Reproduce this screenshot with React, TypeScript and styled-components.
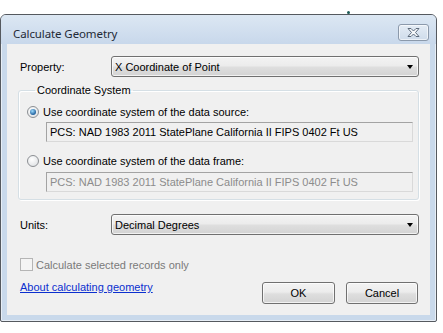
import React from 'react';
import styled, { createGlobalStyle } from 'styled-components';

const Global = createGlobalStyle`
  html, body { margin: 0; padding: 0; background: #fff; }
  body {
    width: 443px; height: 333px; overflow: hidden;
    font-family: "Liberation Sans", Arial, sans-serif;
    font-size: 11px; color: #000;
  }
`;

const Page = styled.div`
  position: relative;
  width: 443px;
  height: 333px;
  box-sizing: border-box;
  padding-top: 14px;
`;

const Dot = styled.div`
  position: absolute;
  left: 347px;
  top: 11px;
  width: 3px;
  height: 3px;
  border-radius: 50%;
  background: #1d5b57;
`;

const Window = styled.div`
  width: 437px;
  height: 308px;
  box-sizing: border-box;
  border: 1px solid #55595f;
  border-radius: 6px 6px 2px 2px;
  background: #c9d9eb;
  box-shadow: inset 0 0 0 1px rgba(255, 255, 255, 0.55);
  display: flex;
  flex-direction: column;
  overflow: hidden;
`;

const TitleBar = styled.div`
  height: 29px;
  flex: none;
  box-sizing: border-box;
  padding: 6px 7px 0 12px;
  display: flex;
  align-items: center;
  justify-content: space-between;
  background: linear-gradient(#dce7f3, #c8d8eb);
`;

const Title = styled.span`
  font-family: "Noto Sans", "Open Sans", sans-serif;
  font-size: 11.5px;
  color: #1f2a36;
  letter-spacing: -0.1px;
  padding-top: 1px;
`;

const CloseButton = styled.div`
  width: 31px;
  height: 17px;
  box-sizing: border-box;
  border: 1px solid #8b99ab;
  border-radius: 3px;
  background: linear-gradient(#e4ecf5, #cfdceb);
  box-shadow: inset 0 0 0 1px rgba(255, 255, 255, 0.6);
  display: flex;
  align-items: center;
  justify-content: center;
`;

const Client = styled.div`
  flex: 1;
  margin: 0 6px 6px 6px;
  background: #f0f0f0;
  box-sizing: border-box;
  padding: 12px 11px 0 11px;
  display: flex;
  flex-direction: column;
`;

const FieldRow = styled.div<{ $top: number }>`
  display: flex;
  align-items: center;
  margin-top: ${(p) => p.$top}px;
`;

const Label = styled.span`
  width: 93px;
  padding-left: 2px;
  box-sizing: border-box;
  flex: none;
`;

const Combo = styled.div`
  flex: 1;
  height: 21px;
  box-sizing: border-box;
  border: 1px solid #707070;
  border-radius: 3px;
  background: linear-gradient(#f3f3f3 0%, #ececec 45%, #dedede 55%, #d3d3d3 100%);
  box-shadow: inset 0 0 0 1px rgba(255, 255, 255, 0.7);
  display: flex;
  align-items: center;
  justify-content: space-between;
  padding: 0 5px 0 3px;
`;

const Arrow = styled.span`
  width: 0;
  height: 0;
  border-left: 3.5px solid transparent;
  border-right: 3.5px solid transparent;
  border-top: 4px solid #000;
`;

const Group = styled.fieldset`
  margin: 6px 0 0 0;
  padding: 8px 5px 7px 8px;
  border: 1px solid #d5dfe5;
  border-radius: 3px;
  box-shadow: inset 1px 1px 0 #fff, 1px 1px 0 #fff;
  min-inline-size: 0;
`;

const Legend = styled.legend`
  padding: 0 2px;
  margin-left: 8px;
  line-height: 14px;
  color: #000;
`;

const RadioRow = styled.div<{ $top: number }>`
  display: flex;
  align-items: center;
  height: 14px;
  margin-top: ${(p) => p.$top}px;
`;

const Radio = styled.span<{ $checked?: boolean }>`
  width: 12px;
  height: 12px;
  flex: none;
  box-sizing: border-box;
  border-radius: 50%;
  border: 1px solid #8c8f93;
  background: radial-gradient(circle at 40% 35%, #ffffff, #d9dcdf);
  display: flex;
  align-items: center;
  justify-content: center;
  margin-right: 4px;
  &::after {
    content: '';
    width: 6px;
    height: 6px;
    border-radius: 50%;
    background: radial-gradient(circle at 40% 35%, #9ddcff, #1f5f9c 70%);
    display: ${(p) => (p.$checked ? 'block' : 'none')};
  }
`;

const TextBox = styled.div<{ $disabled?: boolean; $top: number }>`
  height: 20px;
  box-sizing: border-box;
  margin: ${(p) => p.$top}px 0 0 19px;
  border: 1px solid;
  border-color: #a3a3a3 #d9d9d9 #d9d9d9 #a3a3a3;
  background: #f0f0f0;
  display: flex;
  align-items: center;
  padding-left: 3px;
  color: ${(p) => (p.$disabled ? '#8c8c8c' : '#000')};
  white-space: nowrap;
`;

const CheckRow = styled.div`
  display: flex;
  align-items: center;
  margin-top: 23px;
  padding-left: 2px;
  color: #7a7a7a;
`;

const CheckBox = styled.span`
  width: 13px;
  height: 13px;
  box-sizing: border-box;
  border: 1px solid #b5b5b5;
  background: #f4f4f4;
  margin-right: 3px;
`;

const BottomRow = styled.div`
  display: flex;
  align-items: flex-start;
  justify-content: space-between;
  margin-top: 10px;
  padding-left: 2px;
`;

const Link = styled.a`
  color: #0b2fcf;
  text-decoration: underline;
  line-height: 13px;
  cursor: pointer;
`;

const Buttons = styled.div`
  display: flex;
  gap: 11px;
  margin-right: 1px;
  padding-top: 1px;
`;

const Button = styled.div<{ $w: number }>`
  width: ${(p) => p.$w}px;
  height: 22px;
  box-sizing: border-box;
  border: 1px solid #707070;
  border-radius: 3px;
  background: linear-gradient(#f3f3f3 0%, #ececec 45%, #dedede 55%, #d3d3d3 100%);
  box-shadow: inset 0 0 0 1px rgba(255, 255, 255, 0.7);
  display: flex;
  align-items: center;
  justify-content: center;
`;

const CloseGlyph = () => (
  <svg width="13" height="9" viewBox="0 0 13 9">
    <path
      d="M1 0.5 H4 L6.5 3 L9 0.5 H12 L8.5 4.5 L12 8.5 H9 L6.5 6 L4 8.5 H1 L4.5 4.5 Z"
      fill="#f7f9fb"
      stroke="#5d6b7c"
      strokeWidth="1"
      strokeLinejoin="round"
    />
  </svg>
);

export default function App() {
  const pcs = 'PCS: NAD 1983 2011 StatePlane California II FIPS 0402 Ft US';
  return (
    <Page>
      <Global />
      <Dot />
      <Window>
        <TitleBar>
          <Title>Calculate Geometry</Title>
          <CloseButton>
            <CloseGlyph />
          </CloseButton>
        </TitleBar>
        <Client>
          <FieldRow $top={0}>
            <Label>Property:</Label>
            <Combo>
              <span>X Coordinate of Point</span>
              <Arrow />
            </Combo>
          </FieldRow>
          <Group>
            <Legend>Coordinate System</Legend>
            <RadioRow $top={0}>
              <Radio $checked />
              <span>Use coordinate system of the data source:</span>
            </RadioRow>
            <TextBox $top={3}>{pcs}</TextBox>
            <RadioRow $top={12}>
              <Radio />
              <span>Use coordinate system of the data frame:</span>
            </RadioRow>
            <TextBox $top={4} $disabled>
              {pcs}
            </TextBox>
          </Group>
          <FieldRow $top={14}>
            <Label>Units:</Label>
            <Combo>
              <span>Decimal Degrees</span>
              <Arrow />
            </Combo>
          </FieldRow>
          <CheckRow>
            <CheckBox />
            <span>Calculate selected records only</span>
          </CheckRow>
          <BottomRow>
            <Link>About calculating geometry</Link>
            <Buttons>
              <Button $w={73}>OK</Button>
              <Button $w={72}>Cancel</Button>
            </Buttons>
          </BottomRow>
        </Client>
      </Window>
    </Page>
  );
}
